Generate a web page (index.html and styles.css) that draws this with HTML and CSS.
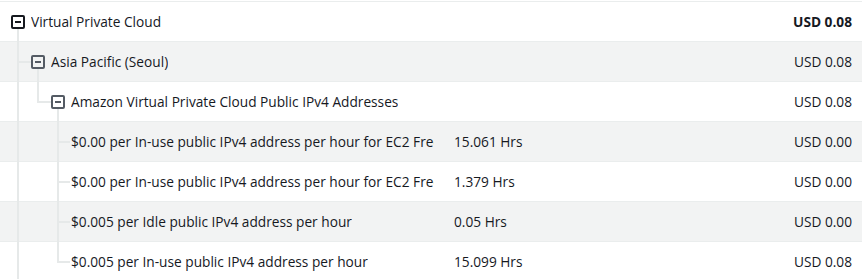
FILE: index.html
```html
<!DOCTYPE html>
<html>
<head>
<meta charset="utf-8">
<link rel="stylesheet" href="styles.css">
</head>
<body>
<div class="tree">
  <div class="row">
    <span class="g v0 from-icon"></span>
    <div class="desc lvl0"><span class="toggle root"></span><span class="label">Virtual Private Cloud</span></div>
    <div class="qty"></div>
    <div class="amt bold">USD 0.08</div>
  </div>
  <div class="row alt">
    <span class="g v0 full"></span>
    <span class="g h h1"></span>
    <span class="g v1 from-icon"></span>
    <div class="desc lvl1"><span class="toggle"></span><span class="label">Asia Pacific (Seoul)</span></div>
    <div class="qty"></div>
    <div class="amt">USD 0.08</div>
  </div>
  <div class="row">
    <span class="g v0 full"></span>
    <span class="g v1 to-mid"></span>
    <span class="g h h2"></span>
    <span class="g v2 from-icon"></span>
    <div class="desc lvl2"><span class="toggle"></span><span class="label">Amazon Virtual Private Cloud Public IPv4 Addresses</span></div>
    <div class="qty"></div>
    <div class="amt">USD 0.08</div>
  </div>
  <div class="row alt">
    <span class="g v0 full"></span>
    <span class="g v2 full"></span>
    <span class="g h h3"></span>
    <div class="desc leaf"><span class="label">$0.00 per In-use public IPv4 address per hour for EC2 Free Tier</span></div>
    <div class="qty">15.061 Hrs</div>
    <div class="amt">USD 0.00</div>
  </div>
  <div class="row">
    <span class="g v0 full"></span>
    <span class="g v2 full"></span>
    <span class="g h h3"></span>
    <div class="desc leaf"><span class="label">$0.00 per In-use public IPv4 address per hour for EC2 Free Tier</span></div>
    <div class="qty">1.379 Hrs</div>
    <div class="amt">USD 0.00</div>
  </div>
  <div class="row alt">
    <span class="g v0 full"></span>
    <span class="g v2 full"></span>
    <span class="g h h3"></span>
    <div class="desc leaf"><span class="label">$0.005 per Idle public IPv4 address per hour</span></div>
    <div class="qty">0.05 Hrs</div>
    <div class="amt">USD 0.00</div>
  </div>
  <div class="row">
    <span class="g v0 full"></span>
    <span class="g v2 to-mid"></span>
    <span class="g h h3"></span>
    <div class="desc leaf"><span class="label">$0.005 per In-use public IPv4 address per hour</span></div>
    <div class="qty">15.099 Hrs</div>
    <div class="amt">USD 0.08</div>
  </div>
</div>
</body>
</html>
```
FILE: styles.css
```css
html, body {
  margin: 0;
  padding: 0;
  background: #ffffff;
}
body {
  font-family: "Open Sans", "Liberation Sans", sans-serif;
  font-size: 13.7px;
  color: #16191f;
}
.tree {
  margin-top: 1px;
  border-top: 1px solid #eaeded;
}
.row {
  position: relative;
  display: grid;
  grid-template-columns: 434px 1fr auto;
  column-gap: 20px;
  align-items: center;
  height: 39px;
  border-bottom: 1px solid #eaeded;
  padding-right: 10px;
}
.row.alt {
  background: #f2f3f3;
}
.desc {
  display: flex;
  align-items: center;
  gap: 6px;
  white-space: nowrap;
  overflow: hidden;
  min-width: 0;
}
.desc.lvl0 { padding-left: 11px; }
.desc.lvl1 { padding-left: 31px; }
.desc.lvl2 { padding-left: 51px; }
.desc.leaf { padding-left: 71px; }
.label {
  overflow: hidden;
  text-overflow: clip;
}
.qty {
  white-space: nowrap;
}
.amt {
  text-align: right;
  white-space: nowrap;
}
.amt.bold {
  font-weight: 700;
}
.toggle {
  position: relative;
  flex: none;
  box-sizing: border-box;
  width: 14px;
  height: 14px;
  border: 2px solid #545b64;
  border-radius: 2px;
}
.toggle::after {
  content: "";
  position: absolute;
  left: 2px;
  top: 4px;
  width: 6px;
  height: 2px;
  background: #545b64;
}
.toggle.root {
  border-color: #16191f;
}
.toggle.root::after {
  background: #16191f;
}
/* tree guide lines (decorations overlaid on the rows) */
.g {
  position: absolute;
  background: #e6e9e9;
}
.v0, .v1, .v2 { width: 2px; }
.v0 { left: 17px; }
.v1 { left: 37px; }
.v2 { left: 57px; }
.full { top: 0; bottom: -1px; }
.from-icon { top: 27px; bottom: -1px; }
.to-mid { top: 0; height: 21px; }
.h { height: 2px; top: 19px; }
.h1 { left: 17px; width: 14px; }
.h2 { left: 37px; width: 14px; }
.h3 { left: 57px; width: 13px; }
```
